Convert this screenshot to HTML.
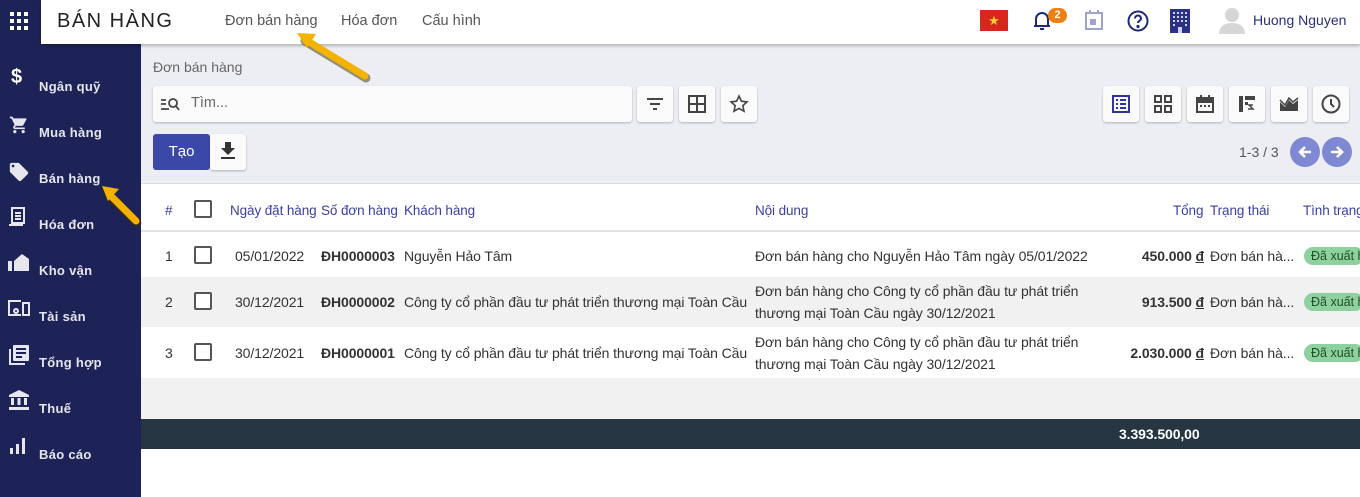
<!DOCTYPE html>
<html><head><meta charset="utf-8"><style>
*{box-sizing:border-box;margin:0;padding:0}
body{width:1360px;height:497px;overflow:hidden;background:#fff;font-family:"Liberation Sans",sans-serif;position:relative;color:#333}
.abs{position:absolute}
#side{left:0;top:0;width:141px;height:497px;background:#1e2357}
#top{left:41px;top:0;width:1319px;height:44px;background:#fff;box-shadow:0 2px 3px rgba(0,0,0,.25);z-index:2}
#content{left:141px;top:44px;width:1219px;height:139px;background:#edeef3}
.si{position:absolute;left:39px;color:#e6e6ef;font-weight:bold;font-size:13px;letter-spacing:.3px}
.ic{position:absolute;left:8px}
.btn{position:absolute;top:86px;width:36px;height:36px;background:#fafafa;border-radius:3px;box-shadow:0 1px 2px rgba(0,0,0,.25)}
.btn svg{position:absolute;left:8px;top:8px}
.t{position:absolute;font-size:14px;white-space:nowrap;letter-spacing:-.1px}
.h{color:#3b3fa0;font-size:13.5px;top:203px}
.cb{position:absolute;left:194px;width:18px;height:18px;border:2px solid #555;border-radius:2px;background:#fff}
.badge{position:absolute;left:1304px;width:60px;height:18px;background:#8fd19e;border-radius:9px;font-size:12.5px;color:#1f4f2a;padding:2px 0 0 7px;white-space:nowrap}
</style></head><body>
<div id="side" class="abs">
 <svg class="abs" style="left:10px;top:12px" width="18" height="18" viewBox="0 0 18 18" fill="#fff"><rect x="0" y="0" width="4" height="4"/><rect x="7" y="0" width="4" height="4"/><rect x="14" y="0" width="4" height="4"/><rect x="0" y="7" width="4" height="4"/><rect x="7" y="7" width="4" height="4"/><rect x="14" y="7" width="4" height="4"/><rect x="0" y="14" width="4" height="4"/><rect x="7" y="14" width="4" height="4"/><rect x="14" y="14" width="4" height="4"/></svg>
 <div class="ic" style="top:66px;left:11px;color:#fff;font-weight:bold;font-size:20px">$</div>
 <div class="si" style="top:79px">Ngân quỹ</div>
 <svg class="ic" style="top:115px" width="22" height="20" viewBox="0 0 24 24" fill="#e6e6ef"><path d="M7 18c-1.1 0-2 .9-2 2s.9 2 2 2 2-.9 2-2-.9-2-2-2zM1 2v2h2l3.6 7.6-1.4 2.4c-.1.3-.2.6-.2 1 0 1.1.9 2 2 2h12v-2H7.4c-.1 0-.2-.1-.2-.2v-.1l.9-1.7h7.4c.8 0 1.4-.4 1.7-1l3.6-6.5c.1-.2.2-.3.2-.5 0-.6-.4-1-1-1H5.2l-.9-2H1zm16 16c-1.1 0-2 .9-2 2s.9 2 2 2 2-.9 2-2-.9-2-2-2z"/></svg>
 <div class="si" style="top:125px">Mua hàng</div>
 <svg class="ic" style="top:161px" width="22" height="22" viewBox="0 0 24 24" fill="#e6e6ef"><path d="M21.4 11.6l-9-9C12.1 2.2 11.6 2 11 2H4c-1.1 0-2 .9-2 2v7c0 .6.2 1.1.6 1.4l9 9c.4.4.9.6 1.4.6s1-.2 1.4-.6l7-7c.4-.4.6-.9.6-1.4s-.2-1.1-.6-1.4zM5.5 7C4.7 7 4 6.3 4 5.5S4.7 4 5.5 4 7 4.7 7 5.5 6.3 7 5.5 7z"/></svg>
 <div class="si" style="top:171px">Bán hàng</div>
 <svg class="ic" style="top:207px" width="20" height="20" viewBox="0 0 20 20" fill="none" stroke="#e6e6ef" stroke-width="2"><rect x="4" y="1" width="12" height="15"/><path d="M7 6h6M7 9h6M7 12h6M1 18h14"/></svg>
 <div class="si" style="top:217px">Hóa đơn</div>
 <svg class="ic" style="top:253px" width="22" height="20" viewBox="0 0 22 20" fill="#e6e6ef"><rect x="0" y="8" width="4" height="10"/><path d="M6 8l8-7 7 5v12H6z"/></svg>
 <div class="si" style="top:263px">Kho vận</div>
 <svg class="ic" style="top:299px" width="22" height="18" viewBox="0 0 22 18" fill="none" stroke="#e6e6ef" stroke-width="2"><path d="M13 2H1v14h12"/><rect x="15" y="4" width="6" height="12"/><circle cx="8" cy="12" r="2"/></svg>
 <div class="si" style="top:309px">Tài sản</div>
 <svg class="ic" style="top:344px" width="22" height="22" viewBox="0 0 22 22" fill="#e6e6ef"><path d="M1 5h2v14h14v2H1z"/><rect x="5" y="1" width="16" height="16" rx="1"/><path d="M8 5h10M8 9h10M8 13h6" stroke="#1e2357" stroke-width="2"/></svg>
 <div class="si" style="top:355px">Tổng hợp</div>
 <svg class="ic" style="top:390px" width="22" height="20" viewBox="0 0 22 20" fill="#e6e6ef"><path d="M11 0l10 5v2H1V5z"/><rect x="3" y="8" width="3" height="7"/><rect x="9.5" y="8" width="3" height="7"/><rect x="16" y="8" width="3" height="7"/><rect x="1" y="17" width="20" height="3"/></svg>
 <div class="si" style="top:401px">Thuế</div>
 <svg class="ic" style="top:438px;left:10px" width="18" height="16" viewBox="0 0 18 16" fill="#e6e6ef"><rect x="0" y="10" width="3" height="6"/><rect x="6" y="6" width="3" height="10"/><rect x="12" y="0" width="3" height="16"/></svg>
 <div class="si" style="top:447px">Báo cáo</div>
</div>
<div id="top" class="abs">
 <div class="abs" style="left:16px;top:10px;font-size:20px;letter-spacing:1.5px;color:#222">BÁN HÀNG</div>
 <div class="abs" style="left:184px;top:13px;font-size:14.5px;color:#555">Đơn bán hàng</div>
 <div class="abs" style="left:300px;top:13px;font-size:14.5px;color:#555">Hóa đơn</div>
 <div class="abs" style="left:381px;top:13px;font-size:14.5px;color:#555">Cấu hình</div>
 <div class="abs" style="left:939px;top:10px;width:28px;height:21px;background:#d9261c"><div style="color:#f8d12e;font-size:13px;text-align:center;line-height:21px">★</div></div>
 <svg class="abs" style="left:991px;top:10px" width="20" height="22" viewBox="0 0 20 22" fill="none" stroke="#1e2a78" stroke-width="2"><path d="M4 16V9a6 6 0 0112 0v7H4zM2 16h16M8 19h4"/></svg>
 <div class="abs" style="left:1007px;top:8px;width:19px;height:15px;border-radius:8px;background:#f07f12;color:#fff;font-size:11px;font-weight:bold;text-align:center;line-height:15px">2</div>
 <svg class="abs" style="left:1044px;top:10px" width="18" height="20" viewBox="0 0 18 20" fill="none" stroke="#9fa3cf" stroke-width="2"><rect x="1" y="3" width="16" height="16"/><path d="M5 0v4M13 0v4"/><rect x="6" y="10" width="4" height="4" fill="#9fa3cf"/></svg>
 <svg class="abs" style="left:1086px;top:10px" width="22" height="22" viewBox="0 0 22 22" fill="none" stroke="#1e2a78" stroke-width="2"><circle cx="11" cy="11" r="9.5"/><path d="M8 8.5a3 3 0 116 0c0 2-3 2.5-3 4.5"/><circle cx="11" cy="16.5" r=".6" fill="#1e2a78"/></svg>
 <svg class="abs" style="left:1129px;top:9px" width="20" height="24" viewBox="0 0 20 24"><rect width="20" height="24" fill="#2b3185"/><g fill="#cfd3f0"><rect x="3" y="3" width="2" height="2"/><rect x="7" y="3" width="2" height="2"/><rect x="11" y="3" width="2" height="2"/><rect x="15" y="3" width="2" height="2"/><rect x="3" y="7" width="2" height="2"/><rect x="7" y="7" width="2" height="2"/><rect x="11" y="7" width="2" height="2"/><rect x="15" y="7" width="2" height="2"/><rect x="3" y="11" width="2" height="2"/><rect x="7" y="11" width="2" height="2"/><rect x="11" y="11" width="2" height="2"/><rect x="15" y="11" width="2" height="2"/><rect x="3" y="15" width="2" height="2"/><rect x="15" y="15" width="2" height="2"/><rect x="8" y="18" width="4" height="6"/></g></svg>
 <svg class="abs" style="left:1178px;top:7px" width="26" height="27" viewBox="0 0 26 27" fill="#d6d6d6"><circle cx="13" cy="8" r="7"/><path d="M0 27c0-8 6-11 13-11s13 3 13 11z"/></svg>
 <div class="abs" style="left:1212px;top:12px;font-size:14px;color:#2a2f7a">Huong Nguyen</div>
</div>
<div id="content" class="abs">
 <div class="abs" style="left:12px;top:15px;font-size:14px;color:#666">Đơn bán hàng</div>
 <div class="abs" style="left:12px;top:42px;width:479px;height:36px;background:#fafafa;border-radius:3px;box-shadow:0 1px 2px rgba(0,0,0,.25)">
  <svg class="abs" style="left:7px;top:11px" width="20" height="14" viewBox="0 0 20 14" fill="none" stroke="#444" stroke-width="1.8"><path d="M1 3h5M1 7h5M1 12h8"/><circle cx="13" cy="6" r="4"/><path d="M16 9l3 4"/></svg>
  <div class="abs" style="left:38px;top:9px;font-size:14.5px;color:#666">Tìm...</div>
 </div>
</div>
<div class="btn" style="left:637px"><svg width="20" height="20" viewBox="0 0 20 20" stroke="#444" stroke-width="2"><path d="M2 5h16M5 10h10M8 15h4"/></svg></div>
<div class="btn" style="left:679px"><svg width="20" height="20" viewBox="0 0 20 20" fill="none" stroke="#444" stroke-width="2"><rect x="2" y="2" width="16" height="16"/><path d="M10 2v16M2 10h16"/></svg></div>
<div class="btn" style="left:721px"><svg width="20" height="20" viewBox="0 0 20 20" fill="none" stroke="#444" stroke-width="1.6"><path d="M10 2l2.4 5.2 5.6.6-4.2 3.8 1.2 5.6L10 14.4 5 17.2l1.2-5.6L2 7.8l5.6-.6z"/></svg></div>
<div class="btn" style="left:1103px"><svg width="20" height="20" viewBox="0 0 20 20" fill="none" stroke="#2e35a0" stroke-width="2"><rect x="2" y="2" width="16" height="16"/><path d="M5 6h2M9 6h6M5 10h2M9 10h6M5 14h2M9 14h6"/></svg></div>
<div class="btn" style="left:1145px"><svg width="20" height="20" viewBox="0 0 20 20" fill="none" stroke="#444" stroke-width="2"><rect x="2" y="2" width="6" height="6"/><rect x="12" y="2" width="6" height="6"/><rect x="2" y="12" width="6" height="6"/><rect x="12" y="12" width="6" height="6"/></svg></div>
<div class="btn" style="left:1187px"><svg width="20" height="20" viewBox="0 0 20 20" fill="none" stroke="#444" stroke-width="2"><rect x="2" y="4" width="16" height="14"/><path d="M2 7h16" stroke-width="4"/><path d="M6 1v3M14 1v3M5 12h2M9 12h2M13 12h2"/></svg></div>
<div class="btn" style="left:1229px"><svg width="20" height="20" viewBox="0 0 20 20" fill="#444"><rect x="2" y="2" width="4" height="16"/><rect x="8" y="2" width="10" height="4"/><rect x="8" y="8" width="3" height="3"/><path d="M11 15h5l-2-2M16 11h-4l2 2" stroke="#444" stroke-width="1.5" fill="none"/></svg></div>
<div class="btn" style="left:1271px"><svg width="20" height="20" viewBox="0 0 20 20" fill="#444"><path d="M1 17V8l5 5 4-7 4 4 5-4v11z"/><path d="M1 6l5 5 4-7 4 4 5-4" fill="none" stroke="#444" stroke-width="1.5"/></svg></div>
<div class="btn" style="left:1313px"><svg width="20" height="20" viewBox="0 0 20 20" fill="none" stroke="#444" stroke-width="2"><circle cx="10" cy="10" r="8.5"/><path d="M10 5v5l3 3"/></svg></div>
<div class="abs" style="left:153px;top:134px;width:57px;height:36px;background:#3c48a8;border-radius:3px;color:#fff;font-size:15px;text-align:center;line-height:36px">Tạo</div>
<div class="abs" style="left:210px;top:134px;width:36px;height:36px;background:#fafafa;border-radius:3px;box-shadow:0 1px 2px rgba(0,0,0,.25)"><svg class="abs" style="left:10px;top:8px" width="16" height="18" viewBox="0 0 16 18" fill="#333"><path d="M5 0h6v6h4l-7 7-7-7h4z"/><rect x="1" y="15" width="14" height="2"/></svg></div>
<div class="abs" style="left:1239px;top:144px;font-size:14px;color:#555">1-3 / 3</div>
<div class="abs" style="left:1290px;top:137px;width:30px;height:30px;border-radius:50%;background:#7f89d3"><svg class="abs" style="left:7px;top:7px" width="16" height="16" viewBox="0 0 16 16" fill="none" stroke="#fff" stroke-width="2.6"><path d="M14 8H3M8 3L3 8l5 5"/></svg></div>
<div class="abs" style="left:1322px;top:137px;width:30px;height:30px;border-radius:50%;background:#7f89d3"><svg class="abs" style="left:7px;top:7px" width="16" height="16" viewBox="0 0 16 16" fill="none" stroke="#fff" stroke-width="2.6"><path d="M2 8h11M8 3l5 5-5 5"/></svg></div>

<div class="abs" style="left:141px;top:183px;width:1219px;height:1px;background:#ddd"></div>
<div class="abs" style="left:141px;top:230px;width:1219px;height:2px;background:#e4e4e4"></div>
<div class="abs" style="left:141px;top:277px;width:1219px;height:50px;background:#f1f1f1"></div>
<div class="abs" style="left:141px;top:378px;width:1219px;height:41px;background:#f1f1f1"></div>
<div class="abs" style="left:141px;top:419px;width:1219px;height:30px;background:#253541"></div>
<div class="t" style="left:1119px;top:426px;color:#fff;font-weight:bold;font-size:14px">3.393.500,00</div>

<div class="t h" style="left:165px">#</div>
<div class="cb" style="top:200px"></div>
<div class="t h" style="left:230px">Ngày đặt hàng</div>
<div class="t h" style="left:321px">Số đơn hàng</div>
<div class="t h" style="left:404px">Khách hàng</div>
<div class="t h" style="left:755px">Nội dung</div>
<div class="t h" style="left:1173px">Tổng</div>
<div class="t h" style="left:1210px">Trạng thái</div>
<div class="t h" style="left:1303px">Tình trạng</div>

<div class="t" style="left:165px;top:248px">1</div><div class="cb" style="top:246px"></div>
<div class="t" style="left:235px;top:248px">05/01/2022</div>
<div class="t" style="left:321px;top:248px;font-weight:bold">ĐH0000003</div>
<div class="t" style="left:404px;top:248px">Nguyễn Hảo Tâm</div>
<div class="t" style="left:755px;top:248px">Đơn bán hàng cho Nguyễn Hảo Tâm ngày 05/01/2022</div>
<div class="t" style="right:156px;top:248px;font-weight:bold">450.000 <u>đ</u></div>
<div class="t" style="left:1210px;top:248px">Đơn bán hà...</div>
<div class="badge" style="top:247px">Đã xuất h</div>

<div class="t" style="left:165px;top:294px">2</div><div class="cb" style="top:292px"></div>
<div class="t" style="left:235px;top:294px">30/12/2021</div>
<div class="t" style="left:321px;top:294px;font-weight:bold">ĐH0000002</div>
<div class="t" style="left:404px;top:294px">Công ty cổ phần đầu tư phát triển thương mại Toàn Cầu</div>
<div class="t" style="left:755px;top:283px">Đơn bán hàng cho Công ty cổ phần đầu tư phát triển</div>
<div class="t" style="left:755px;top:305px">thương mại Toàn Cầu ngày 30/12/2021</div>
<div class="t" style="right:156px;top:294px;font-weight:bold">913.500 <u>đ</u></div>
<div class="t" style="left:1210px;top:294px">Đơn bán hà...</div>
<div class="badge" style="top:293px">Đã xuất h</div>

<div class="t" style="left:165px;top:345px">3</div><div class="cb" style="top:343px"></div>
<div class="t" style="left:235px;top:345px">30/12/2021</div>
<div class="t" style="left:321px;top:345px;font-weight:bold">ĐH0000001</div>
<div class="t" style="left:404px;top:345px">Công ty cổ phần đầu tư phát triển thương mại Toàn Cầu</div>
<div class="t" style="left:755px;top:334px">Đơn bán hàng cho Công ty cổ phần đầu tư phát triển</div>
<div class="t" style="left:755px;top:356px">thương mại Toàn Cầu ngày 30/12/2021</div>
<div class="t" style="right:156px;top:345px;font-weight:bold">2.030.000 <u>đ</u></div>
<div class="t" style="left:1210px;top:345px">Đơn bán hà...</div>
<div class="badge" style="top:344px">Đã xuất h</div>

<svg class="abs" style="left:0;top:0;z-index:5" width="1360" height="497">
 <g stroke="#3a3000" stroke-opacity=".5" stroke-width="9" stroke-linecap="round" fill="none" transform="translate(1,2)">
  <path d="M365 76L304 39"/><path d="M136 221L108 194"/></g>
 <g stroke="#f3b200" stroke-width="7" stroke-linecap="round" fill="none">
  <path d="M365 76L306 40"/><path d="M136 221L110 195"/></g>
 <path d="M297 33l19 1-9 14z" fill="#f3b200"/>
 <path d="M102 186l17 3-11 12z" fill="#f3b200"/>
</svg>
</body></html>
